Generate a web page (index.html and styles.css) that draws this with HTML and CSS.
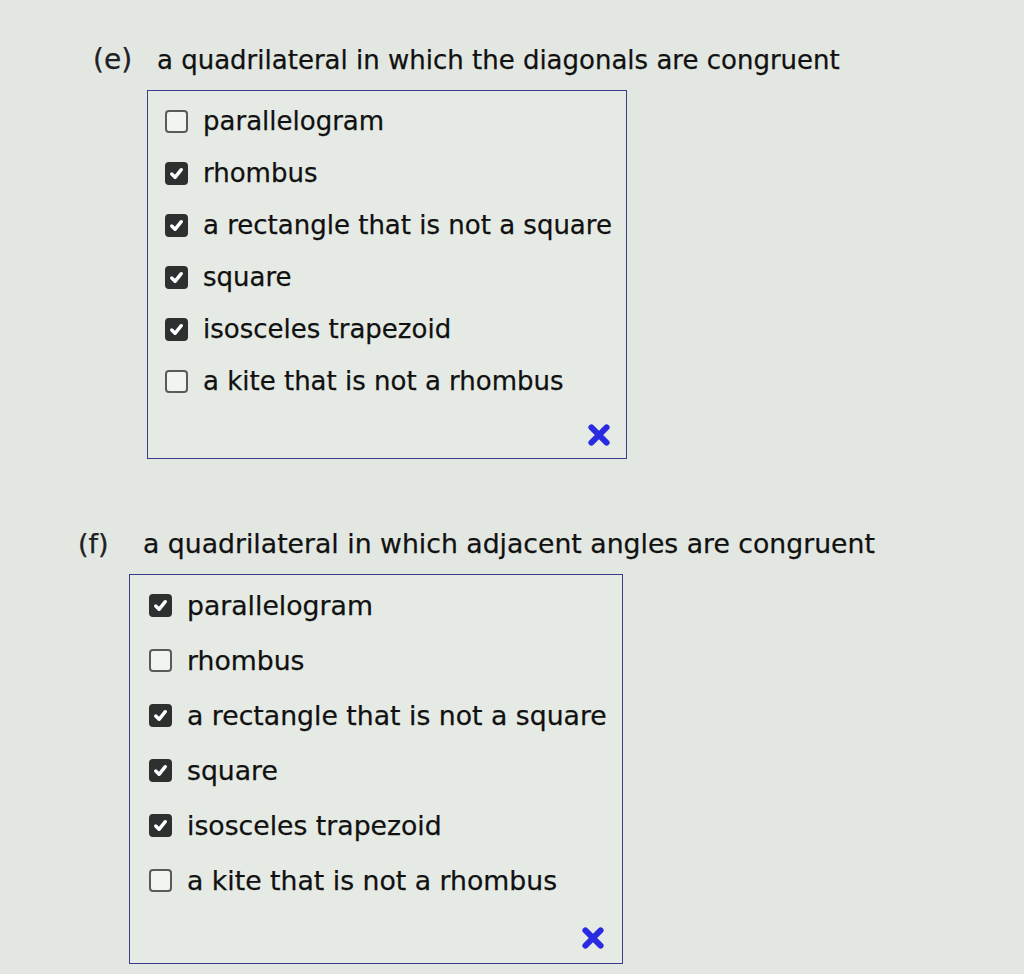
FILE: index.html
```html
<!DOCTYPE html>
<html>
<head>
<meta charset="utf-8">
<link rel="stylesheet" href="styles.css">
</head>
<body>
<div class="page">
  <section class="question q-e">
    <div class="label">(e)</div>
    <div class="body">
      <div class="title">a quadrilateral in which the diagonals are congruent</div>
      <div class="box">
        <div class="row"><span class="cb"></span><span>parallelogram</span></div>
        <div class="row"><span class="cb on"><svg viewBox="0 0 20 20"><path d="M5 10.5 L8.5 14 L15 6" /></svg></span><span>rhombus</span></div>
        <div class="row"><span class="cb on"><svg viewBox="0 0 20 20"><path d="M5 10.5 L8.5 14 L15 6" /></svg></span><span>a rectangle that is not a square</span></div>
        <div class="row"><span class="cb on"><svg viewBox="0 0 20 20"><path d="M5 10.5 L8.5 14 L15 6" /></svg></span><span>square</span></div>
        <div class="row"><span class="cb on"><svg viewBox="0 0 20 20"><path d="M5 10.5 L8.5 14 L15 6" /></svg></span><span>isosceles trapezoid</span></div>
        <div class="row"><span class="cb"></span><span>a kite that is not a rhombus</span></div>
        <div class="foot"><svg class="x" viewBox="0 0 24 24"><path d="M5 5 L19 19 M19 5 L5 19" /></svg></div>
      </div>
    </div>
  </section>
  <section class="question q-f">
    <div class="label">(f)</div>
    <div class="body">
      <div class="title">a quadrilateral in which adjacent angles are congruent</div>
      <div class="box">
        <div class="row"><span class="cb on"><svg viewBox="0 0 20 20"><path d="M5 10.5 L8.5 14 L15 6" /></svg></span><span>parallelogram</span></div>
        <div class="row"><span class="cb"></span><span>rhombus</span></div>
        <div class="row"><span class="cb on"><svg viewBox="0 0 20 20"><path d="M5 10.5 L8.5 14 L15 6" /></svg></span><span>a rectangle that is not a square</span></div>
        <div class="row"><span class="cb on"><svg viewBox="0 0 20 20"><path d="M5 10.5 L8.5 14 L15 6" /></svg></span><span>square</span></div>
        <div class="row"><span class="cb on"><svg viewBox="0 0 20 20"><path d="M5 10.5 L8.5 14 L15 6" /></svg></span><span>isosceles trapezoid</span></div>
        <div class="row"><span class="cb"></span><span>a kite that is not a rhombus</span></div>
        <div class="foot"><svg class="x" viewBox="0 0 24 24"><path d="M5 5 L19 19 M19 5 L5 19" /></svg></div>
      </div>
    </div>
  </section>
</div>
</body>
</html>
```

FILE: styles.css
```css
html, body {
  margin: 0;
  padding: 0;
  background: #e3e7e2;
}
body {
  font-family: "DejaVu Sans", Verdana, sans-serif;
  color: #111;
  width: 1024px;
  height: 974px;
  overflow: hidden;
  -webkit-text-stroke: 0.25px #111;
}
.page {
  padding-top: 44px;
}
.question {
  display: flex;
  padding-left: 78px;
}
.q-f {
  margin-top: 69px;
}
.label {
  font-size: 26px;
  line-height: 32px;
  color: #222;
  box-sizing: border-box;
}
.q-e .label { width: 79px; padding-left: 15px; font-size: 28px; }
.q-f .label { width: 65px; font-size: 27px; }
.title {
  font-size: 26px;
  line-height: 32px;
  white-space: nowrap;
}
.q-f .title { font-size: 26.7px; }
.box {
  margin-top: 14px;
  border: 1.5px solid #3c3c8c;
  background: #e6eae4;
  box-sizing: border-box;
  display: flex;
  flex-direction: column;
  font-size: 26px;
}
.q-e .box {
  margin-left: -10px;
  width: 480px;
  height: 369px;
  padding: 4px 0 0 17px;
}
.q-f .box {
  margin-left: -14px;
  width: 494px;
  height: 390px;
  padding: 3px 0 0 19px;
  font-size: 26.7px;
}
.row {
  display: flex;
  align-items: center;
  gap: 15px;
  height: 52px;
}
.q-f .row { height: 55px; }
.cb {
  flex: none;
  width: 23px;
  height: 23px;
  box-sizing: border-box;
  border: 2px solid #5a5a5a;
  border-radius: 4px;
  background: #f2f4f2;
  display: flex;
}
.cb.on {
  background: #2c302e;
  border-color: #2c302e;
}
.cb svg {
  width: 100%;
  height: 100%;
}
.cb svg path {
  fill: none;
  stroke: #fff;
  stroke-width: 3.6;
  stroke-linecap: round;
  stroke-linejoin: round;
}
.foot {
  display: flex;
  justify-content: flex-end;
  padding-right: 14px;
  margin-top: 15px;
}
.q-f .foot { padding-right: 16px; margin-top: 17px; }
.x {
  width: 26px;
  height: 26px;
}
.x path {
  stroke: #2a2ae0;
  stroke-width: 5.5;
  stroke-linecap: round;
  fill: none;
}
```
